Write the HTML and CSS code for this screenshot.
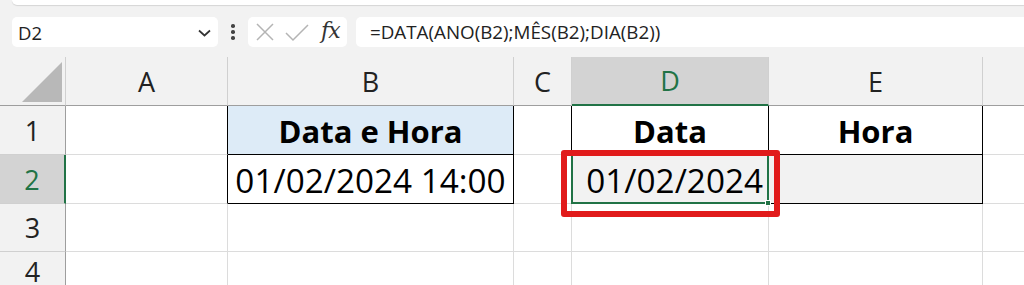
FILE: index.html
```html
<!DOCTYPE html>
<html lang="pt">
<head>
<meta charset="utf-8">
<link rel="stylesheet" href="styles.css">
</head>
<body>
<div class="topbar"></div>
<div class="toolbar">
  <div class="namebox">
    <span class="name">D2</span>
    <svg class="chev" width="13" height="8" viewBox="0 0 13 8"><path d="M1 1.5 L6.5 6.5 L12 1.5" fill="none" stroke="#333" stroke-width="1.7"/></svg>
  </div>
  <div class="dots"><i></i><i></i><i></i></div>
  <div class="fxbox">
    <svg width="20" height="20" viewBox="0 0 20 20"><path d="M2 2 L18 18 M18 2 L2 18" stroke="#b4b4b4" stroke-width="1.5" fill="none"/></svg>
    <svg width="24" height="20" viewBox="0 0 24 20"><path d="M1 11 L8 18 L23 3" stroke="#b4b4b4" stroke-width="1.5" fill="none"/></svg>
    <span class="fx">fx</span>
  </div>
  <div class="formula">=DATA(ANO(B2);MÊS(B2);DIA(B2))</div>
</div>
<div class="sheet">
  <div class="grid">
    <div class="c hd corner"><svg width="40" height="40" viewBox="0 0 40 40"><path d="M40 0 L40 40 L0 40 Z" fill="#b8b8b8"/></svg></div>
    <div class="c hd">A</div>
    <div class="c hd">B</div>
    <div class="c hd">C</div>
    <div class="c hd sel-col">D</div>
    <div class="c hd">E</div>
    <div class="c hd last"></div>

    <div class="c rh">1</div>
    <div class="c br"></div>
    <div class="c blue bold br bb">Data e Hora</div>
    <div class="c br"></div>
    <div class="c bold br bb">Data</div>
    <div class="c bold br bb">Hora</div>
    <div class="c last"></div>

    <div class="c rh sel-row">2</div>
    <div class="c br"></div>
    <div class="c br bb">01/02/2024 14:00</div>
    <div class="c br"></div>
    <div class="c grey right br bb active">01/02/2024<span class="handle"></span></div>
    <div class="c grey br bb"></div>
    <div class="c last"></div>

    <div class="c rh">3</div>
    <div class="c"></div>
    <div class="c"></div>
    <div class="c"></div>
    <div class="c"></div>
    <div class="c"></div>
    <div class="c last"></div>

    <div class="c rh">4</div>
    <div class="c"></div>
    <div class="c"></div>
    <div class="c"></div>
    <div class="c"></div>
    <div class="c"></div>
    <div class="c last"></div>
  </div>
  <div class="redbox"></div>
</div>
</body>
</html>
```
FILE: styles.css
```css
* { box-sizing: border-box; }
html, body { margin: 0; padding: 0; }
body {
  width: 1024px;
  height: 285px;
  overflow: hidden;
  background: #f2f2f2;
  font-family: "Open Sans", "Noto Sans", sans-serif;
  color: #000;
}
.topbar {
  margin-left: 12px;
  height: 5px;
  background: #fff;
  border-bottom-left-radius: 5px;
  box-shadow: 0 1px 1px rgba(0,0,0,0.12);
}
.toolbar {
  display: flex;
  align-items: center;
  height: 30px;
  margin-top: 12px;
  padding-left: 12px;
}
.namebox {
  width: 206px;
  height: 30px;
  background: #fff;
  border-radius: 5px;
  display: flex;
  align-items: center;
  justify-content: space-between;
  padding: 0 7px 0 6px;
  font-size: 18.5px;
  color: #222;
}
.chev { margin-top: 1px; }
.dots {
  width: 30px;
  display: flex;
  flex-direction: column;
  align-items: center;
  gap: 2.5px;
}
.dots i {
  display: block;
  width: 3.5px;
  height: 3.5px;
  border-radius: 50%;
  background: #444;
}
.fxbox {
  width: 99px;
  height: 30px;
  background: #fff;
  border-radius: 5px;
  display: flex;
  align-items: center;
  padding-left: 7px;
  gap: 10px;
}
.fx {
  font-family: "DejaVu Serif", "Liberation Serif", serif;
  font-style: italic;
  font-size: 22px;
  color: #333;
  letter-spacing: -1px;
  margin-left: 2px;
  margin-top: -3px;
}
.formula {
  margin-left: 9px;
  flex: 1;
  height: 30px;
  background: #fff;
  border-radius: 5px 0 0 5px;
  display: flex;
  align-items: center;
  padding-left: 14px;
  font-size: 18.8px;
  color: #222;
}
.sheet {
  position: relative;
  margin-top: 10px;
}
.grid {
  display: grid;
  grid-template-columns: 66px 162px 286px 58px 197px 214px 41px;
  grid-template-rows: 49px 49px 49px 48px 40px;
}
.c {
  border-right: 1px solid #dcdcdc;
  border-bottom: 1px solid #dcdcdc;
  background: #fff;
  display: flex;
  align-items: center;
  justify-content: center;
  font-size: 33.3px;
  padding-top: 2px;
  position: relative;
  white-space: nowrap;
}
.c.last { border-right: none; }
.hd {
  background: #f2f2f2;
  border-right: 1px solid #d0d0d0;
  border-bottom: 1px solid #9e9e9e;
  font-size: 27px;
  color: #222;
  padding-top: 0;
}
.hd.last { background: #f2f2f2; }
.corner {
  align-items: flex-end;
  justify-content: flex-end;
  padding: 0 3px 3px 0;
}
.sel-col {
  background: #d3d3d3;
  color: #217346;
  border-bottom: 2px solid #217346;
}
.rh {
  background: #f2f2f2;
  border-right: 1px solid #9e9e9e;
  border-bottom: 1px solid #d0d0d0;
  font-size: 27px;
  color: #222;
  padding-top: 0;
}
.sel-row {
  background: #d3d3d3;
  color: #217346;
  border-right: 2px solid #217346;
}
.bold { font-weight: 700; font-size: 31px; }
.blue { background: #ddebf7; }
.grey { background: #f2f2f2; }
.br { border-right-color: #000; }
.bb { border-bottom-color: #000; }
.right { justify-content: flex-end; padding-right: 5px; }
.active::after {
  content: "";
  position: absolute;
  left: -1px;
  top: -1px;
  right: -1px;
  bottom: -1px;
  border: 2px solid #217346;
  pointer-events: none;
}
.handle {
  position: absolute;
  right: -3px;
  bottom: -3px;
  width: 6px;
  height: 6px;
  background: #217346;
  border: 1px solid #fff;
  z-index: 2;
}
.redbox {
  position: absolute;
  left: 561px;
  top: 93px;
  width: 219px;
  height: 67px;
  border: 6px solid #e11b1b;
  border-radius: 3px;
  pointer-events: none;
}
```
